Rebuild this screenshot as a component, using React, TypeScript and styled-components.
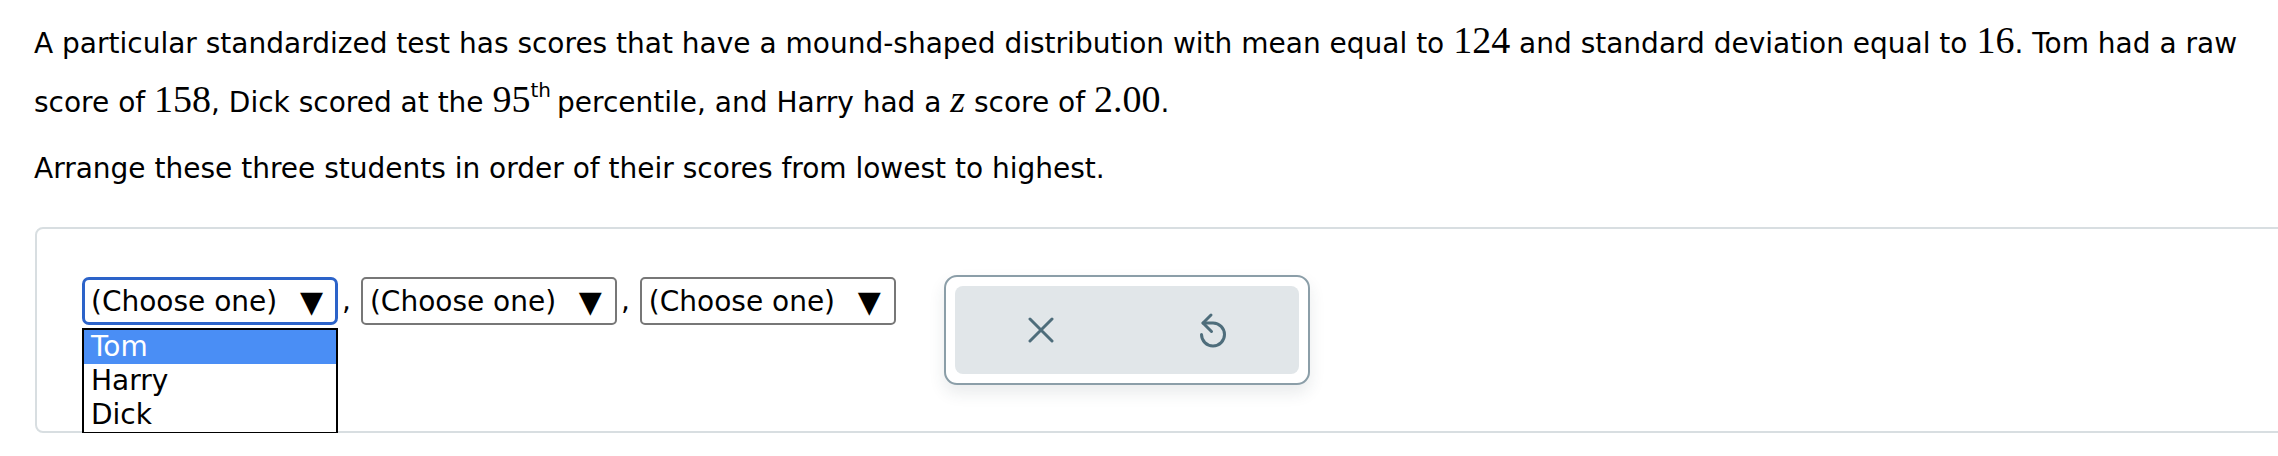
import React from "react";
import styled, { createGlobalStyle } from "styled-components";

const GlobalStyle = createGlobalStyle`
  html, body {
    margin: 0;
    padding: 0;
    overflow: hidden;
    background: #fff;
  }
  body {
    font-family: "DejaVu Sans", Verdana, sans-serif;
    color: #000;
  }
`;

const Page = styled.div`
  width: 2300px;
  padding: 14px 0 0 34px;
  box-sizing: border-box;
`;

const Para = styled.p`
  margin: 0 0 7px;
  font-size: 28px;
  line-height: 59px;
`;

const Num = styled.span<{ $italic?: boolean }>`
  font-family: "Liberation Serif", "Times New Roman", serif;
  font-size: 38px;
  line-height: 1;
  font-style: ${({ $italic }) => ($italic ? "italic" : "normal")};
`;

const Sup = styled.sup`
  font-size: 20px;
  line-height: 1;
  vertical-align: 15px;
  margin-right: 6px;
`;

const Panel = styled.div`
  margin: 29px 0 0 1px;
  border: 2px solid #d8dee1;
  border-radius: 8px;
  padding: 46px 0 46px 45px;
`;

const Row = styled.div`
  display: flex;
  align-items: flex-start;
`;

const SelectWrap = styled.div`
  position: relative;
  margin-top: 2px;
`;

const SelectBox = styled.div<{ $focused?: boolean }>`
  box-sizing: border-box;
  width: 256px;
  height: 48px;
  display: flex;
  align-items: center;
  justify-content: space-between;
  font-size: 28px;
  background: #fff;
  border: ${({ $focused }) => ($focused ? "3px solid #2c63c9" : "2px solid #777")};
  border-radius: ${({ $focused }) => ($focused ? "7px" : "5px")};
  padding: ${({ $focused }) => ($focused ? "0 12px 0 6px" : "0 13px 0 7px")};
`;

const Arrow = styled.span`
  font-size: 30px;
`;

const Comma = styled.span`
  font-size: 28px;
  line-height: 48px;
  margin: 2px 10px 0 4px;
`;

const OptionList = styled.div`
  position: absolute;
  top: 51px;
  left: 0;
  width: 256px;
  box-sizing: border-box;
  border: 2px solid #000;
  background: #fff;
  z-index: 2;
`;

const Option = styled.div<{ $active?: boolean }>`
  height: 34px;
  line-height: 34px;
  font-size: 28px;
  padding-left: 7px;
  background: ${({ $active }) => ($active ? "#4a8ef5" : "#fff")};
  color: ${({ $active }) => ($active ? "#fff" : "#000")};
`;

const ToolGroup = styled.div`
  margin-left: 48px;
  width: 366px;
  height: 110px;
  box-sizing: border-box;
  border: 2px solid #8b9ea8;
  border-radius: 13px;
  padding: 9px;
  background: #fff;
  box-shadow: 0 8px 16px rgba(40, 60, 70, 0.1);
`;

const ToolInner = styled.div`
  height: 100%;
  background: #e1e6e9;
  border-radius: 8px;
  display: flex;
`;

const ToolButton = styled.button`
  flex: 1;
  border: 0;
  background: transparent;
  display: flex;
  align-items: center;
  justify-content: center;
  padding: 0;
  cursor: pointer;
`;

const ICON = "#4e6d7b";

const CloseIcon = () => (
  <svg width="26" height="26" viewBox="0 0 26 26">
    <path d="M2 2 L24 24 M24 2 L2 24" stroke={ICON} strokeWidth="3" strokeLinecap="round" fill="none" />
  </svg>
);

const UndoIcon = () => (
  <svg width="30" height="36" viewBox="0 0 30 36">
    <path
      d="M5 11 H15 A11.5 11.5 0 1 1 3.5 22.5"
      stroke={ICON}
      strokeWidth="3"
      strokeLinecap="round"
      fill="none"
    />
    <path
      d="M13 3 L5 11 L13.5 19.5"
      stroke={ICON}
      strokeWidth="3"
      strokeLinecap="round"
      strokeLinejoin="round"
      fill="none"
    />
  </svg>
);

const names = ["Tom", "Harry", "Dick"];

const Choice = ({ focused, open }: { focused?: boolean; open?: boolean }) => (
  <SelectWrap>
    <SelectBox $focused={focused}>
      <span>(Choose one)</span>
      <Arrow>▼</Arrow>
    </SelectBox>
    {open && (
      <OptionList>
        {names.map((n, i) => (
          <Option key={n} $active={i === 0}>
            {n}
          </Option>
        ))}
      </OptionList>
    )}
  </SelectWrap>
);

export default function App() {
  return (
    <>
      <GlobalStyle />
      <Page>
        <Para>
          A particular standardized test has scores that have a mound-shaped distribution with mean equal to{" "}
          <Num>124</Num> and standard deviation equal to <Num>16</Num>. Tom had a raw score of <Num>158</Num>, Dick
          scored at the <Num>95</Num>
          <Sup>th</Sup>percentile, and Harry had a <Num $italic>z</Num> score of <Num>2.00</Num>.
        </Para>
        <Para>Arrange these three students in order of their scores from lowest to highest.</Para>
        <Panel>
          <Row>
            <Choice focused open />
            <Comma>,</Comma>
            <Choice />
            <Comma>,</Comma>
            <Choice />
            <ToolGroup>
              <ToolInner>
                <ToolButton aria-label="Clear">
                  <CloseIcon />
                </ToolButton>
                <ToolButton aria-label="Undo">
                  <UndoIcon />
                </ToolButton>
              </ToolInner>
            </ToolGroup>
          </Row>
        </Panel>
      </Page>
    </>
  );
}
